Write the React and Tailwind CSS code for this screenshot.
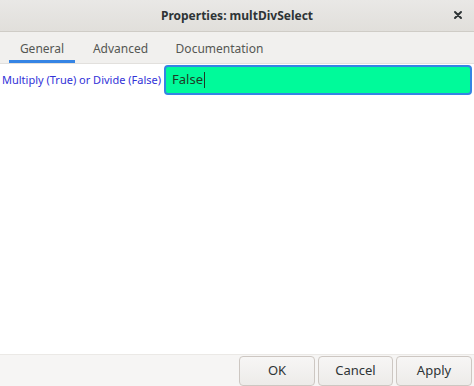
export default function App() {
  const font = { fontFamily: '"Noto Sans", "DejaVu Sans", sans-serif' };
  return (
    <div className="w-[474px] h-[386px] flex flex-col bg-white overflow-hidden" style={font}>
      <div className="h-[32px] shrink-0 relative flex items-center justify-center bg-gradient-to-b from-[#e9e8e6] to-[#e1dfdb] border-b border-[#cfccc6]">
        <span className="text-[12px] font-bold text-[#2e3436]">Properties: multDivSelect</span>
        <span className="absolute right-[10px] top-[8px] w-[12px] h-[14px] flex items-center justify-center">
          <svg width="10" height="10" viewBox="0 0 10 10">
            <path d="M2 2 L8 8 M8 2 L2 8" stroke="#2e3436" strokeWidth="2" strokeLinecap="round" />
          </svg>
        </span>
      </div>
      <div className="h-[32px] shrink-0 flex items-stretch bg-[#f1f0ee] border-b border-[#e2e0dd] pl-[9px]">
        <div className="w-[66px] flex items-center justify-center relative text-[12px] text-[#555753] pt-[2px]">
          General
          <div className="absolute left-0 right-0 bottom-0 h-[3px] bg-[#3584e4]" />
        </div>
        <div className="w-[91px] flex items-center justify-center text-[12px] text-[#555753] pt-[2px]">Advanced</div>
        <div className="w-[107px] flex items-center justify-center text-[12px] text-[#555753] pt-[2px]">Documentation</div>
      </div>
      <div className="flex-1 flex flex-col">
        <div className="flex items-center pt-[1px] pl-[2px] pr-[2px] gap-[3px]">
          <span className="text-[11px] text-[#3232d8] whitespace-nowrap">Multiply (True) or Divide (False)</span>
          <div className="flex-1 h-[30px] bg-[#00fa9a] border-[2px] border-[#3584e4] rounded-[4px] flex items-center pl-[6px]">
            <span className="text-[13px] text-[#1e3a26]">False</span>
            <span className="w-[1px] h-[16px] bg-[#1e3a26] ml-[1px]" />
          </div>
        </div>
      </div>
      <div className="h-[32px] shrink-0 bg-[#f6f5f4] border-t border-[#ebe9e6] flex items-center justify-end gap-[3px] pr-[2px]">
        <button className="w-[76px] h-[30px] rounded-[4px] border border-[#cdc7c2] bg-gradient-to-b from-[#f7f6f5] to-[#edebe9] text-[13px] text-[#2e3436]">OK</button>
        <button className="w-[75px] h-[30px] rounded-[4px] border border-[#cdc7c2] bg-gradient-to-b from-[#f7f6f5] to-[#edebe9] text-[13px] text-[#2e3436]">Cancel</button>
        <button className="w-[76px] h-[30px] rounded-[4px] border border-[#cdc7c2] bg-gradient-to-b from-[#f7f6f5] to-[#edebe9] text-[13px] text-[#2e3436]">Apply</button>
      </div>
    </div>
  );
}
